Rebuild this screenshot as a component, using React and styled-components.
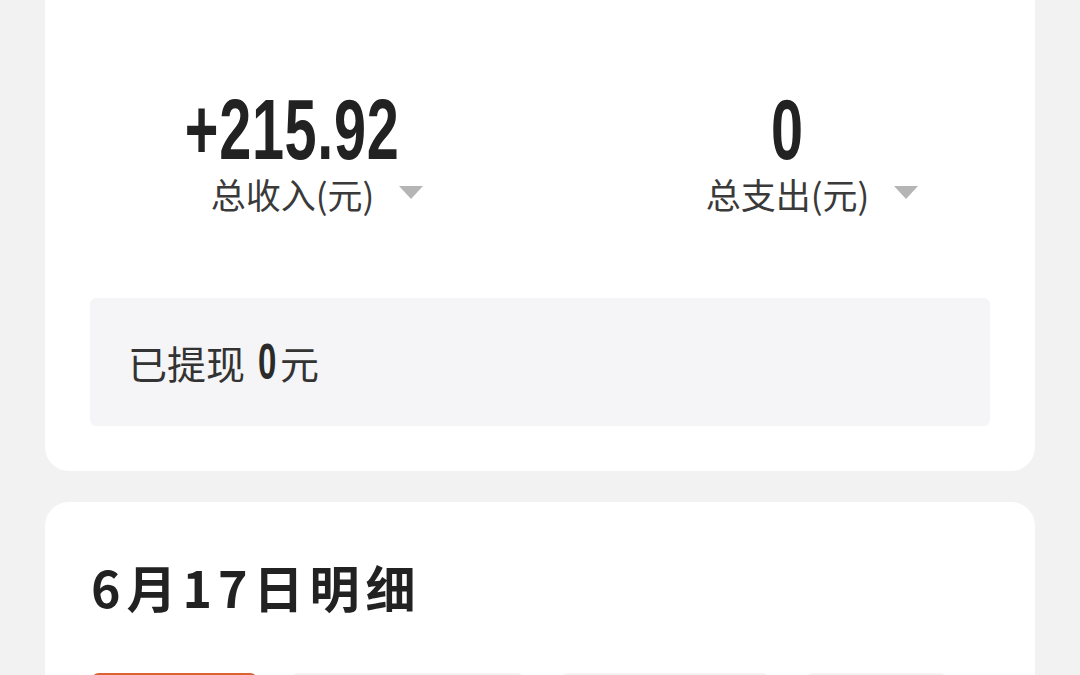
import styled, { createGlobalStyle } from "styled-components";

const GlobalStyle = createGlobalStyle`
  html, body {
    margin: 0;
    padding: 0;
    background: #f2f2f2;
    font-family: "Noto Sans CJK SC", "Noto Sans", sans-serif;
    overflow: hidden;
  }
`;

const Page = styled.div`
  width: 1080px;
  height: 675px;
  overflow: hidden;
  padding: 0 45px;
  box-sizing: border-box;
  display: flex;
  flex-direction: column;
  gap: 31px;
`;

const Card = styled.div`
  background: #ffffff;
  border-radius: ${(p) => (p.$top ? "0 0 24px 24px" : "24px 24px 0 0")};
  padding: ${(p) => p.$pad};
`;

const Stats = styled.div`
  display: grid;
  grid-template-columns: 1fr 1fr;
  padding-top: 84px;
`;

const Stat = styled.div`
  display: flex;
  flex-direction: column;
  align-items: center;
`;

const Amount = styled.div`
  font-family: "Liberation Sans", Arial, sans-serif;
  font-weight: 700;
  font-size: 86px;
  line-height: 90px;
  color: #222;
  transform: scaleX(0.67);
  letter-spacing: 1px;
`;

const Label = styled.div`
  position: relative;
  font-size: 35px;
  line-height: 40px;
  color: #3a3a3a;
`;

const Caret = styled.span`
  position: absolute;
  left: calc(100% + 25px);
  top: 12px;
  width: 0;
  height: 0;
  border-left: 12.5px solid transparent;
  border-right: 12.5px solid transparent;
  border-top: 13px solid #b5b5b5;
`;

const Withdrawn = styled.div`
  margin: 84px 45px 0;
  height: 128px;
  background: #f5f5f7;
  border-radius: 6px;
  display: flex;
  align-items: center;
  padding-left: 38px;
  font-size: 39px;
  color: #333;
`;

const Zero = styled.span`
  display: inline-block;
  margin-left: 13px;
  font-family: "Liberation Sans", Arial, sans-serif;
  font-weight: 700;
  font-size: 50px;
  color: #2a2a2a;
  transform: scaleX(0.66);
  transform-origin: left center;
  width: 22px;
`;

const Title = styled.h2`
  margin: 0;
  font-size: 50px;
  line-height: 60px;
  font-weight: 700;
  letter-spacing: 6px;
  color: #222;
`;

const Tabs = styled.div`
  display: flex;
  margin-top: 57px;
`;

const Tab = styled.div`
  height: 60px;
  width: ${(p) => p.$w}px;
  margin-right: ${(p) => p.$gap}px;
  border-radius: 8px;
  background: ${(p) => (p.$active ? "#dc6234" : "#f3f3f6")};
`;

const tabs = [
  { w: 167, gap: 32, active: true },
  { w: 235, gap: 35 },
  { w: 210, gap: 35 },
  { w: 143, gap: 0 },
];

export default function App() {
  return (
    <>
      <GlobalStyle />
      <Page>
        <Card $top $pad="0 0 45px">
          <Stats>
            <Stat>
              <Amount>+215.92</Amount>
              <Label>
                总收入(元)
                <Caret />
              </Label>
            </Stat>
            <Stat>
              <Amount>0</Amount>
              <Label>
                总支出(元)
                <Caret />
              </Label>
            </Stat>
          </Stats>
          <Withdrawn>
            已提现<Zero>0</Zero>元
          </Withdrawn>
        </Card>
        <Card $pad="54px 46px 0">
          <Title>6月17日明细</Title>
          <Tabs>
            {tabs.map((t, i) => (
              <Tab key={i} $w={t.w} $gap={t.gap} $active={t.active} />
            ))}
          </Tabs>
        </Card>
      </Page>
    </>
  );
}
